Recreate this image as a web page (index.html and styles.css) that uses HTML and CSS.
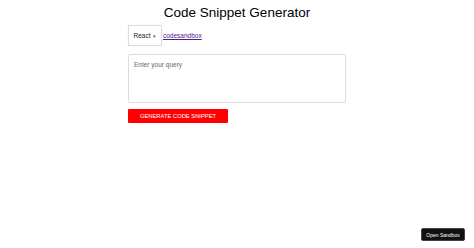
FILE: index.html
```html
<!DOCTYPE html>
<html lang="en">
<head>
  <meta charset="UTF-8">
  <title>Code Snippet Generator</title>
  <link rel="stylesheet" href="styles.css">
</head>
<body>
  <div class="app">
    <h1 class="title">Code Snippet Generator</h1>
    <div class="row">
      <div class="select">React <span class="caret">&#9662;</span></div>
      <a class="link" href="#">codesandbox</a>
    </div>
    <div class="query">Enter your query</div>
    <button class="generate">GENERATE CODE SNIPPET</button>
  </div>
  <button class="open-sandbox">Open Sandbox</button>
</body>
</html>
```

FILE: styles.css
```css
html, body {
  margin: 0;
  padding: 0;
  background: #fff;
  height: 100%;
  font-family: "Liberation Sans", Arial, sans-serif;
}

body {
  position: relative;
}

.app {
  width: 218px;
  margin: 0 auto;
  padding-top: 4px;
  display: flex;
  flex-direction: column;
  align-items: flex-start;
}

.title {
  align-self: center;
  margin: 0;
  font-size: 13.5px;
  font-weight: normal;
  line-height: 17px;
  color: #000;
  white-space: nowrap;
}

.row {
  display: flex;
  align-items: center;
  margin-top: 4px;
}

.select {
  width: 34px;
  height: 21px;
  box-sizing: border-box;
  border: 1px solid #ddd;
  box-shadow: 0 0 1px rgba(0,0,0,0.1);
  font-size: 6.5px;
  display: flex;
  align-items: center;
  justify-content: center;
  gap: 3px;
  color: #222;
}

.caret {
  font-size: 5px;
  color: #555;
}

.link {
  margin-left: 1px;
  font-size: 6.5px;
  color: #551a8b;
  text-decoration: underline;
}

.query {
  margin-top: 8px;
  width: 218px;
  height: 49px;
  box-sizing: border-box;
  border: 1px solid #ddd;
  border-radius: 2px;
  padding: 6px 5px;
  font-size: 6.5px;
  color: #666;
}

.generate {
  margin-top: 6px;
  width: 100px;
  height: 14px;
  border: none;
  border-radius: 1px;
  background: #ff0000;
  color: #fff;
  font-family: "Liberation Sans", Arial, sans-serif;
  font-size: 5.8px;
  padding: 0;
}

.open-sandbox {
  position: absolute;
  right: 9px;
  bottom: 7px;
  width: 44px;
  height: 13px;
  padding: 0;
  border: 1px solid #444;
  border-radius: 2px;
  background: #111;
  color: #fff;
  font-family: "Liberation Sans", Arial, sans-serif;
  font-size: 5px;
}
```
